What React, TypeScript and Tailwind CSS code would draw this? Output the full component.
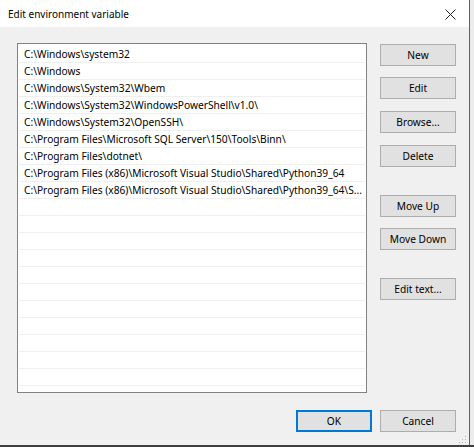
import React from "react";

const paths = [
  "C:\\Windows\\system32",
  "C:\\Windows",
  "C:\\Windows\\System32\\Wbem",
  "C:\\Windows\\System32\\WindowsPowerShell\\v1.0\\",
  "C:\\Windows\\System32\\OpenSSH\\",
  "C:\\Program Files\\Microsoft SQL Server\\150\\Tools\\Binn\\",
  "C:\\Program Files\\dotnet\\",
  "C:\\Program Files (x86)\\Microsoft Visual Studio\\Shared\\Python39_64",
  "C:\\Program Files (x86)\\Microsoft Visual Studio\\Shared\\Python39_64\\S...",
];

const rows = [...paths, ...Array.from({ length: 14 }, () => "")];

function Btn({ label, className = "" }: { label: string; className?: string }) {
  return (
    <div
      className={`h-[22px] w-[76px] flex items-center justify-center bg-[#e1e1e1] border border-[#adadad] text-[10.2px] text-black leading-none ${className}`}
    >
      {label}
    </div>
  );
}

export default function App() {
  return (
    <div className="w-[474px] h-[447px] bg-[#f0f0f0] overflow-hidden flex flex-col font-['Noto_Sans',sans-serif]">
      <div className="flex flex-row h-[445px]">
        <div className="w-[469px] flex flex-col">
          <div className="h-[27px] bg-white flex items-center justify-between pl-[8px] pr-[10px] pt-[1px]">
            <span className="text-[10px] text-black">Edit environment variable</span>
            <svg width="11" height="11" viewBox="0 0 11 11" className="mr-[3px]">
              <path d="M0.5 0.5 L10.5 10.5 M10.5 0.5 L0.5 10.5" stroke="#222" strokeWidth="1" />
            </svg>
          </div>
          <div className="flex flex-row pt-[16px] pl-[17px]">
            <div className="w-[350px] h-[350px] bg-white border border-[#828282] overflow-hidden pt-[2px] px-[1px]">
              {rows.map((r, i) => (
                <div
                  key={i}
                  className="h-[17px] border-b border-[#efefef] pl-[5px] pt-[1px] flex items-center text-[10.2px] text-black whitespace-nowrap overflow-hidden"
                >
                  {r}
                </div>
              ))}
            </div>
            <div className="ml-[13px] flex flex-col">
              <Btn label="New" className="mt-[1px]" />
              <Btn label="Edit" className="mt-[11px]" />
              <Btn label="Browse..." className="mt-[12px]" />
              <Btn label="Delete" className="mt-[12px]" />
              <Btn label="Move Up" className="mt-[28px]" />
              <Btn label="Move Down" className="mt-[11px]" />
              <Btn label="Edit text..." className="mt-[28px]" />
            </div>
          </div>
          <div className="flex flex-row justify-end pr-[13px] mt-[17px] gap-[8px]">
            <div className="h-[22px] w-[76px] flex items-center justify-center bg-[#e1e1e1] border border-[#0078d7] shadow-[inset_0_0_0_1px_#0078d7] text-[10.2px] text-black leading-none">
              OK
            </div>
            <Btn label="Cancel" />
          </div>
          <div className="flex-1 flex justify-end items-end pr-[2px] pb-[1px]">
            <svg width="8" height="8" viewBox="0 0 8 8">
              <rect x="6" y="0" width="1" height="1" fill="#b5b5b5" />
              <rect x="3" y="3" width="1" height="1" fill="#b5b5b5" />
              <rect x="6" y="3" width="1" height="1" fill="#b5b5b5" />
              <rect x="0" y="6" width="1" height="1" fill="#b5b5b5" />
              <rect x="3" y="6" width="1" height="1" fill="#b5b5b5" />
              <rect x="6" y="6" width="1" height="1" fill="#b5b5b5" />
            </svg>
          </div>
        </div>
        <div className="w-[1px] bg-[#5f5f5f]" />
        <div className="flex-1 bg-[#ececec]" />
      </div>
      <div className="h-[2px] bg-[#3f3f3f]" />
    </div>
  );
}
